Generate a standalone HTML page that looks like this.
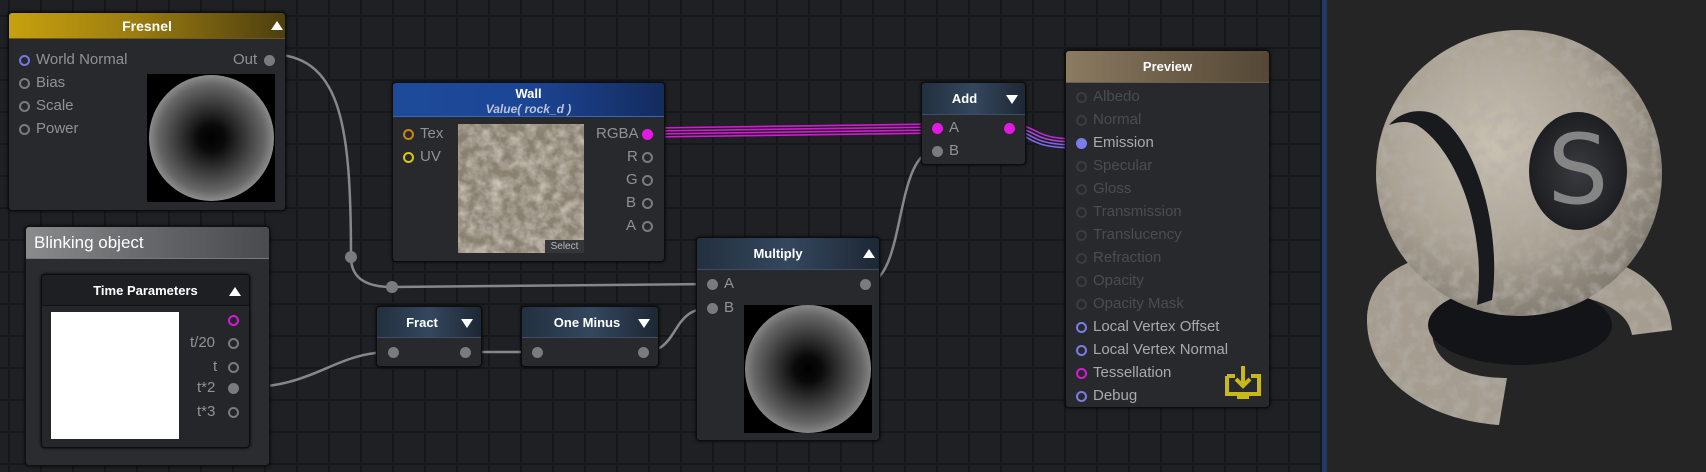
<!DOCTYPE html>
<html><head><meta charset="utf-8"><style>
*{margin:0;padding:0;box-sizing:border-box}
body{width:1706px;height:472px;overflow:hidden;background:#1c1d20;font-family:"Liberation Sans","DejaVu Sans",sans-serif;position:relative}
#grid{position:absolute;left:0;top:0;width:1323px;height:472px;
background-image:linear-gradient(to right,#16171a 0,#16171a 2px,transparent 2px),linear-gradient(to bottom,#16171a 0,#16171a 2px,transparent 2px);
background-size:32px 32px;background-position:8px 15px;background-color:#1f2023}
.node{position:absolute;background:#27292d;border:1px solid #0c0d0f;border-radius:4px;box-shadow:0 0 3px #000}
.hd{position:absolute;left:0;right:0;top:0;color:#fff;font-weight:bold;font-size:13px;text-align:center;border-radius:3px 3px 0 0;border-bottom:1px solid #3d4f66}
.blue{background:linear-gradient(90deg,#22303f,#34475e 50%,#1d2734)}
.lbl{position:absolute;color:#8f9297;font-size:15px;line-height:18px;white-space:nowrap}
.c{position:absolute;width:11px;height:11px;border-radius:50%;border:2px solid #7a7b7e}
.f{background:#7a7b7e}
.tri{position:absolute;width:0;height:0;border-left:6px solid transparent;border-right:6px solid transparent}
.up{border-bottom:9px solid #fff}.dn{border-top:9px solid #fff}
.dim{color:#4a4c51}.dimc{border-color:#3a3c40}
</style></head><body>
<div id="grid"></div>

<svg style="position:absolute;left:0;top:0" width="1706" height="472">
<g fill="none" stroke="#85878a" stroke-width="2.5">
<path d="M268,54 C340,54 351,120 351,257 C351,282 372,287 392,287 L711,284"/>
<path d="M236,388 C320,388 330,352 393,352"/>
<path d="M465,352 L536,352"/>
<path d="M642,352 C682,352 668,308 711,308"/>
<path d="M864,284 C908,284 892,150 937,150"/>
</g>
<circle cx="351" cy="257" r="6" fill="#7a7b7e"/>
<circle cx="392" cy="287" r="6" fill="#7a7b7e"/>
<g fill="none" stroke="#d21ad2" stroke-width="1.6">
<path d="M652,128 L937,124"/><path d="M652,131 L937,127"/><path d="M652,134 L937,130"/><path d="M652,137 L937,133"/>
</g>
<g fill="none" stroke-width="1.6">
<path d="M1012,125 C1040,125 1030,139 1078,139" stroke="#c025d8"/>
<path d="M1012,128 C1038,128 1028,142 1078,142" stroke="#a34be0"/>
<path d="M1012,131 C1036,131 1026,145 1078,145" stroke="#8a5de8"/>
<path d="M1012,134 C1034,134 1024,148 1078,148" stroke="#7d6aee"/>
</g>
</svg>

<!-- Fresnel -->
<div class="node" style="left:8px;top:12px;width:278px;height:199px">
<div class="hd" style="height:26px;line-height:26px;background:linear-gradient(90deg,#c7a10e,#9c7d10 45%,#4d3f0f);border-bottom:1px solid #6b5a1c;font-size:14px">Fresnel</div>
<div class="tri up" style="left:262px;top:8px"></div>
<div class="c" style="left:10px;top:42px;border-color:#7777e0"></div><div class="lbl" style="left:27px;top:38px">World Normal</div>
<div class="c" style="left:10px;top:65px"></div><div class="lbl" style="left:27px;top:61px">Bias</div>
<div class="c" style="left:10px;top:88px"></div><div class="lbl" style="left:27px;top:84px">Scale</div>
<div class="c" style="left:10px;top:111px"></div><div class="lbl" style="left:27px;top:107px">Power</div>
<div class="lbl" style="left:224px;top:38px">Out</div><div class="c f" style="left:255px;top:42px"></div>
<div style="position:absolute;left:138px;top:61px;width:128px;height:128px;background:#000">
<div style="position:absolute;left:2px;top:1px;width:125px;height:126px;border-radius:50%;background:radial-gradient(circle,#000 0%,#0a0a0a 15%,#666 60%,#f2f2f2 100%)"></div></div>
</div>

<!-- Blinking object -->
<div class="node" style="left:25px;top:226px;width:245px;height:240px;background:#2b2c30;border-color:#111">
<div class="hd" style="height:32px;line-height:32px;text-align:left;padding-left:8px;font-weight:normal;font-size:17px;background:linear-gradient(90deg,#8a8b8d,#606164 60%,#4a4b4e);border-bottom:1px solid #777">Blinking object</div>
</div>
<div class="node" style="left:41px;top:274px;width:209px;height:174px;background:#24262a">
<div class="hd" style="height:31px;line-height:31px;background:#1e1f22;border-bottom:1px solid #111">Time Parameters</div>
<div class="tri up" style="left:187px;top:12px"></div>
<div style="position:absolute;left:9px;top:37px;width:128px;height:127px;background:#fff"></div>
<div class="c" style="left:186px;top:40px;border-color:#d51ad5"></div>
<div class="lbl" style="left:148px;top:59px">t/20</div><div class="c" style="left:186px;top:63px"></div>
<div class="lbl" style="left:171px;top:83px">t</div><div class="c" style="left:186px;top:87px"></div>
<div class="lbl" style="left:155px;top:104px">t*2</div><div class="c f" style="left:186px;top:108px"></div>
<div class="lbl" style="left:155px;top:128px">t*3</div><div class="c" style="left:186px;top:132px"></div>
</div>

<!-- Wall -->
<div class="node" style="left:392px;top:82px;width:273px;height:180px">
<div class="hd" style="height:34px;background:linear-gradient(90deg,#1d4b9a,#1c4595 50%,#142c5e);border-bottom:1px solid #3a66b8;line-height:15px;padding-top:3px">Wall<br><i style="font-size:12px;color:#b9c4dc">Value( rock_d )</i></div>
<div class="c" style="left:10px;top:46px;border-color:#c8870f"></div><div class="lbl" style="left:27px;top:42px">Tex</div>
<div class="c" style="left:10px;top:69px;border-color:#d8c80e"></div><div class="lbl" style="left:27px;top:65px">UV</div>
<svg style="position:absolute;left:65px;top:41px" width="126" height="129">
<filter id="nz"><feTurbulence type="fractalNoise" baseFrequency="0.09" numOctaves="3" seed="3"/><feColorMatrix values="0 0 0 0 0.63  0 0 0 0 0.59  0 0 0 0 0.52  0 0 0 -1.6 1.1"/></filter>
<rect width="126" height="129" fill="#8a8171"/>
<rect width="126" height="129" filter="url(#nz)"/>
</svg>
<div style="position:absolute;left:152px;top:157px;width:39px;height:13px;background:#34363a;color:#bbb;font-size:10px;line-height:13px;text-align:center">Select</div>
<div class="lbl" style="left:203px;top:42px">RGBA</div><div class="c" style="left:249px;top:46px;background:#e21ae2;border-color:#e21ae2"></div>
<div class="lbl" style="left:234px;top:65px">R</div><div class="c" style="left:249px;top:69px"></div>
<div class="lbl" style="left:233px;top:88px">G</div><div class="c" style="left:249px;top:92px"></div>
<div class="lbl" style="left:233px;top:111px">B</div><div class="c" style="left:249px;top:115px"></div>
<div class="lbl" style="left:233px;top:134px">A</div><div class="c" style="left:249px;top:138px"></div>
</div>

<!-- Fract -->
<div class="node" style="left:376px;top:306px;width:106px;height:61px">
<div class="hd blue" style="height:31px;line-height:31px;padding-right:14px">Fract</div>
<div class="tri dn" style="left:84px;top:12px"></div>
<div class="c f" style="left:11px;top:40px"></div><div class="c f" style="left:83px;top:40px"></div>
</div>
<!-- One Minus -->
<div class="node" style="left:521px;top:306px;width:138px;height:61px">
<div class="hd blue" style="height:31px;line-height:31px;padding-right:6px">One Minus</div>
<div class="tri dn" style="left:116px;top:12px"></div>
<div class="c f" style="left:10px;top:40px"></div><div class="c f" style="left:116px;top:40px"></div>
</div>

<!-- Multiply -->
<div class="node" style="left:696px;top:237px;width:184px;height:204px">
<div class="hd blue" style="height:32px;line-height:32px;padding-right:20px">Multiply</div>
<div class="tri up" style="left:166px;top:11px"></div>
<div class="c f" style="left:10px;top:41px"></div><div class="lbl" style="left:27px;top:37px">A</div>
<div class="c f" style="left:10px;top:65px"></div><div class="lbl" style="left:27px;top:61px">B</div>
<div class="c f" style="left:163px;top:41px"></div>
<div style="position:absolute;left:47px;top:67px;width:128px;height:128px;background:#000">
<div style="position:absolute;left:1px;top:0;width:126px;height:128px;border-radius:50%;background:radial-gradient(circle,#000 0%,#0a0a0a 15%,#666 60%,#ddd 100%)"></div></div>
</div>

<!-- Add -->
<div class="node" style="left:921px;top:82px;width:105px;height:83px">
<div class="hd blue" style="height:32px;line-height:32px;padding-right:18px">Add</div>
<div class="tri dn" style="left:84px;top:12px"></div>
<div class="c" style="left:10px;top:40px;background:#e21ae2;border-color:#e21ae2"></div><div class="lbl" style="left:27px;top:36px">A</div>
<div class="c f" style="left:10px;top:63px"></div><div class="lbl" style="left:27px;top:59px">B</div>
<div class="c" style="left:82px;top:40px;background:#e21ae2;border-color:#e21ae2"></div>
</div>

<!-- Preview -->
<div class="node" style="left:1065px;top:50px;width:205px;height:358px">
<div class="hd" style="height:32px;line-height:32px;background:linear-gradient(90deg,#8b7b62,#6e5f49 50%,#544836);border-bottom:1px solid #6a5e4c">Preview</div>
<div class="c dimc" style="left:10px;top:41px"></div><div class="lbl dim" style="left:27px;top:37px">Albedo</div>
<div class="c dimc" style="left:10px;top:64px"></div><div class="lbl dim" style="left:27px;top:60px">Normal</div>
<div class="c" style="left:10px;top:87px;background:#7c7ce8;border-color:#7c7ce8"></div><div class="lbl" style="left:27px;top:83px;color:#a8aab0">Emission</div>
<div class="c dimc" style="left:10px;top:110px"></div><div class="lbl dim" style="left:27px;top:106px">Specular</div>
<div class="c dimc" style="left:10px;top:133px"></div><div class="lbl dim" style="left:27px;top:129px">Gloss</div>
<div class="c dimc" style="left:10px;top:156px"></div><div class="lbl dim" style="left:27px;top:152px">Transmission</div>
<div class="c dimc" style="left:10px;top:179px"></div><div class="lbl dim" style="left:27px;top:175px">Translucency</div>
<div class="c dimc" style="left:10px;top:202px"></div><div class="lbl dim" style="left:27px;top:198px">Refraction</div>
<div class="c dimc" style="left:10px;top:225px"></div><div class="lbl dim" style="left:27px;top:221px">Opacity</div>
<div class="c dimc" style="left:10px;top:248px"></div><div class="lbl dim" style="left:27px;top:244px">Opacity Mask</div>
<div class="c" style="left:10px;top:271px;border-color:#7c7ce8"></div><div class="lbl" style="left:27px;top:267px;color:#a8aab0">Local Vertex Offset</div>
<div class="c" style="left:10px;top:294px;border-color:#7c7ce8"></div><div class="lbl" style="left:27px;top:290px;color:#a8aab0">Local Vertex Normal</div>
<div class="c" style="left:10px;top:317px;border-color:#d51ad5"></div><div class="lbl" style="left:27px;top:313px;color:#a8aab0">Tessellation</div>
<div class="c" style="left:10px;top:340px;border-color:#7c7ce8"></div><div class="lbl" style="left:27px;top:336px;color:#a8aab0">Debug</div>
<svg style="position:absolute;left:158px;top:313px" width="38" height="40" viewBox="0 0 38 40">
<path d="M3,12 H11 M27,12 H35 V30 H3 V12" fill="none" stroke="#c9b81a" stroke-width="4"/>
<path d="M19,2 V22 M12,15 L19,22 L26,15" fill="none" stroke="#c9b81a" stroke-width="4"/>
<rect x="13" y="31" width="12" height="4" fill="#c9b81a"/>
</svg>
</div>

<!-- right panel -->
<div style="position:absolute;left:1322px;top:0;width:5px;height:472px;background:#243a5c"></div>
<div style="position:absolute;left:1327px;top:0;width:379px;height:472px;background:#252525"></div>
<svg style="position:absolute;left:1327px;top:0" width="379" height="472">
<defs>
<radialGradient id="sg" cx="0.42" cy="0.4" r="0.65"><stop offset="0" stop-color="#c9c1b2"/><stop offset="0.6" stop-color="#aaa293"/><stop offset="1" stop-color="#7d776d"/></radialGradient>
<radialGradient id="hg" cx="0.5" cy="0.5" r="0.5"><stop offset="0" stop-color="#3a3b3e"/><stop offset="1" stop-color="#1d1e22"/></radialGradient>
<filter id="mot"><feTurbulence type="fractalNoise" baseFrequency="0.08" numOctaves="3" seed="7"/><feColorMatrix values="0 0 0 0 0.45  0 0 0 0 0.43  0 0 0 0 0.40  0 0 0 -2 1.2"/></filter>
<clipPath id="sc"><circle cx="192" cy="173" r="143"/></clipPath>
<clipPath id="bc"><path d="M40,320 C40,250 140,245 193,255 C250,245 340,260 345,330 L305,335 C300,300 240,290 195,292 C140,292 105,300 105,330 C105,370 150,378 180,378 L172,425 C100,420 40,380 40,320Z"/></clipPath>
</defs>
<path d="M40,320 C40,250 140,245 193,255 C250,245 340,260 345,330 L305,335 C300,300 240,290 195,292 C140,292 105,300 105,330 C105,370 150,378 180,378 L172,425 C100,420 40,380 40,320Z" fill="#a59d8f"/>
<rect x="0" y="240" width="379" height="200" clip-path="url(#bc)" filter="url(#mot)" opacity="0.8"/>
<ellipse cx="193" cy="325" rx="92" ry="40" fill="#131418"/>
<circle cx="192" cy="173" r="143" fill="url(#sg)"/>
<rect x="40" y="25" width="310" height="300" clip-path="url(#sc)" filter="url(#mot)" opacity="0.8"/>
<path d="M62,125 C75,110 95,108 110,115 C150,140 175,230 165,300 L150,305 C160,230 130,150 90,125 C80,120 70,122 62,125Z" fill="#181a1e"/>
<ellipse cx="251" cy="171" rx="49" ry="59" fill="url(#hg)"/>
<text x="251" y="203" text-anchor="middle" font-family="DejaVu Sans,sans-serif" font-size="96" fill="#858585">S</text>
</svg>
</body></html>
